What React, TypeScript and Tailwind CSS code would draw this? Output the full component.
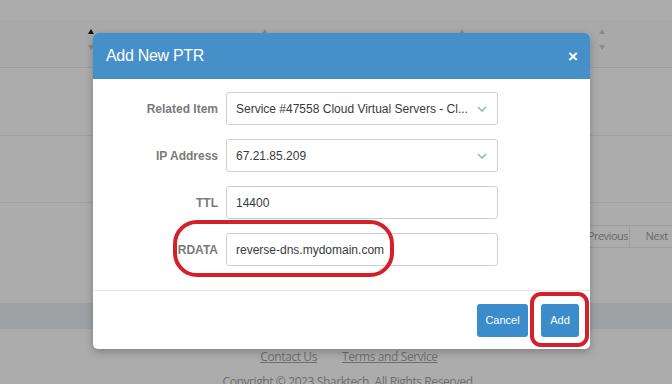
import React from "react";

const Up = ({ color }: { color: string }) => (
  <svg width="6" height="5" viewBox="0 0 6 5"><polygon points="3,0 6,5 0,5" fill={color} /></svg>
);
const Down = ({ color }: { color: string }) => (
  <svg width="6" height="5" viewBox="0 0 6 5"><polygon points="0,0 6,0 3,5" fill={color} /></svg>
);

const SortCol = ({ w, active }: { w: string; active?: boolean }) => (
  <div className={`${w} h-full flex flex-col items-end pt-[9px] gap-[11px] pr-[3px]`}>
    <Up color={active ? "#111" : "#8a8a8a"} />
    <Down color="#8a8a8a" />
  </div>
);

const Chevron = () => (
  <svg width="10" height="6" viewBox="0 0 10 6" className="shrink-0">
    <polyline points="1,1 5,5 9,1" fill="none" stroke="#8fb1cc" strokeWidth="1.5" />
  </svg>
);

const Row = ({ label, children }: { label: string; children: React.ReactNode }) => (
  <div className="flex items-center">
    <div className="w-[125px] text-right text-[12px] font-bold text-[#7a7a7a]">{label}</div>
    <div className="ml-[8px] w-[272px] h-[33px] border border-[#cfcfcf] rounded-[3px] flex items-center justify-between pl-[9px] pr-[10px] text-[12px] text-[#3a3a3a]">
      {children}
    </div>
  </div>
);

export default function App() {
  return (
    <div
      className="relative w-[672px] h-[384px] overflow-hidden bg-[#acacac]"
      style={{ fontFamily: '"Liberation Sans", Arial, sans-serif' }}
    >
      {/* background page */}
      <div className="h-[20px]" />
      <div className="h-[48px] bg-[#a9a9a9] border-b border-[#9d9d9d] flex">
        <SortCol w="w-[97px]" active />
        <SortCol w="w-[174px]" />
        <SortCol w="w-[197px]" />
        <SortCol w="w-[140px]" />
      </div>
      <div className="h-[68px] border-b border-[#a0a0a0]" />
      <div className="h-[67px] border-b border-[#a0a0a0]" />
      <div className="h-[22px]" />
      <div
        className="flex justify-end mr-[-12px] h-[23px] text-[11px] text-[#6a6a6a] tracking-[-0.5px]"
        style={{ fontFamily: '"Open Sans", sans-serif' }}
      >
        <div className="w-[51px] border border-[#9e9e9e] flex items-center justify-end pr-[1px]">Previous</div>
        <div className="w-[54px] border border-l-0 border-[#9e9e9e] flex items-center justify-center">Next</div>
      </div>
      <div className="h-[55px]" />
      <div className="h-[26px] bg-[#9ea1a3]" />
      <div
        className="flex flex-col items-center pl-[26px] text-[12px] text-[#6e6e6e] tracking-[-0.4px]"
        style={{ fontFamily: '"Open Sans", sans-serif' }}
      >
        <div className="flex gap-[25px] mt-[19px]">
          <span className="underline">Contact Us</span>
          <span className="underline">Terms and Service</span>
        </div>
        <div className="mt-[7px]">Copyright © 2023 Sharktech. All Rights Reserved.</div>
      </div>

      {/* modal */}
      <div className="absolute left-[93px] top-[33px] w-[497px] bg-white rounded-[5px] overflow-hidden shadow-[0_3px_9px_rgba(0,0,0,0.25)]">
        <div className="h-[46px] bg-[#4590c9] flex items-center justify-between pl-[13px] pr-[12px]">
          <span className="text-white text-[16px] tracking-[-0.3px]">Add New PTR</span>
          <span className="text-white text-[17px] font-bold leading-none">×</span>
        </div>
        <div className="pt-[13px] pb-[24px] flex flex-col gap-[14px]">
          <Row label="Related Item">
            <span>Service #47558 Cloud Virtual Servers - Cl...</span>
            <Chevron />
          </Row>
          <Row label="IP Address">
            <span>67.21.85.209</span>
            <Chevron />
          </Row>
          <Row label="TTL">
            <span>14400</span>
          </Row>
          <Row label="RDATA">
            <span>reverse-dns.mydomain.com</span>
          </Row>
        </div>
        <div className="border-t border-[#e8e8e8] pt-[13px] pb-[12px] pr-[11px] flex justify-end gap-[13px]">
          <button className="w-[51px] h-[33px] rounded-[3px] bg-[#3a8dca] text-white text-[11px]">Cancel</button>
          <button className="w-[38px] h-[33px] rounded-[3px] bg-[#3a8dca] text-white text-[11px]">Add</button>
        </div>
      </div>

      {/* red annotations */}
      <div className="absolute left-[173px] top-[220px] w-[221px] h-[57px] border-[4px] border-[#d3202a] rounded-[24px]" />
      <div className="absolute left-[530px] top-[292px] w-[59px] h-[55px] border-[4px] border-[#d3202a] rounded-[11px]" />
    </div>
  );
}
